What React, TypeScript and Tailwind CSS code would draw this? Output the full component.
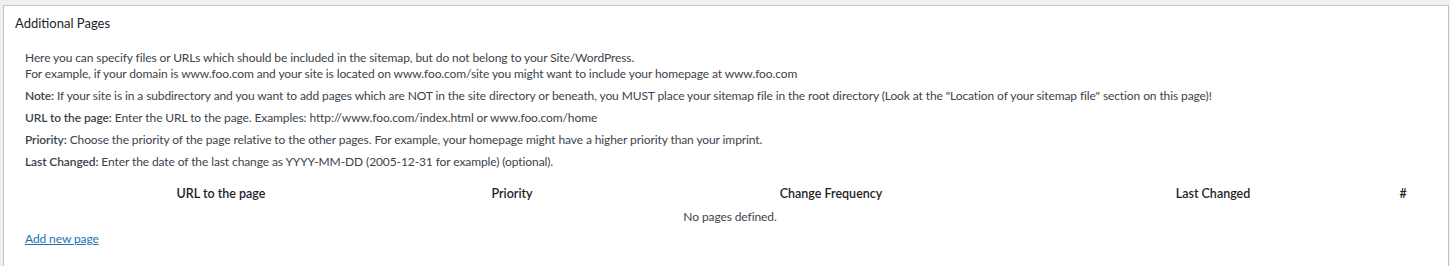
import React from "react";

const cols = [
  { label: "URL to the page", w: "w-[392px]" },
  { label: "Priority", w: "w-[190px]" },
  { label: "Change Frequency", w: "w-[448px]" },
  { label: "Last Changed", w: "w-[316px]" },
  { label: "#", w: "w-[64px]" },
];

export default function App() {
  return (
    <div className="w-[1450px] h-[266px] overflow-hidden bg-[#f0f0f1] pl-[3px] pt-[5px] font-['Lato',sans-serif] text-[12px] tracking-[-0.1px] text-[#3c434a]">
      <div className="w-[1446px] h-[300px] bg-white border border-[#c3c4c7]">
        <h2 className="px-[11px] pt-[7px] h-[30px] text-[13px] tracking-normal leading-[20px] text-[#1d2327] font-normal">
          Additional Pages
        </h2>
        <div className="pl-[21px] pt-[14px]">
          <p className="leading-[16px]">
            Here you can specify files or URLs which should be included in the sitemap, but do not belong to your Site/WordPress.
            <br />
            For example, if your domain is www.foo.com and your site is located on www.foo.com/site you might want to include your homepage at www.foo.com
          </p>
          <ul className="mt-[6px] flex flex-col gap-[6px] leading-[16px]">
            <li>
              <b className="font-semibold">Note:</b> If your site is in a subdirectory and you want to add pages which are NOT in the site directory or beneath, you MUST place your sitemap file in the root directory (Look at the "Location of your sitemap file" section on this page)!
            </li>
            <li>
              <b className="font-semibold">URL to the page:</b> Enter the URL to the page. Examples: http://www.foo.com/index.html or www.foo.com/home
            </li>
            <li>
              <b className="font-semibold">Priority:</b> Choose the priority of the page relative to the other pages. For example, your homepage might have a higher priority than your imprint.
            </li>
            <li>
              <b className="font-semibold">Last Changed:</b> Enter the date of the last change as YYYY-MM-DD (2005-12-31 for example) (optional).
            </li>
          </ul>
          <div className="w-[1410px]">
            <div className="mt-[12px] flex h-[24px] items-center text-[12.5px] tracking-normal font-semibold text-[#1d2327]">
              {cols.map((c) => (
                <div key={c.label} className={`${c.w} text-center`}>
                  {c.label}
                </div>
              ))}
            </div>
            <div className="h-[22px] flex items-center justify-center">No pages defined.</div>
          </div>
          <div className="h-[22px] flex items-center">
            <a href="#" className="text-[#2271b1] underline">Add new page</a>
          </div>
        </div>
      </div>
    </div>
  );
}
